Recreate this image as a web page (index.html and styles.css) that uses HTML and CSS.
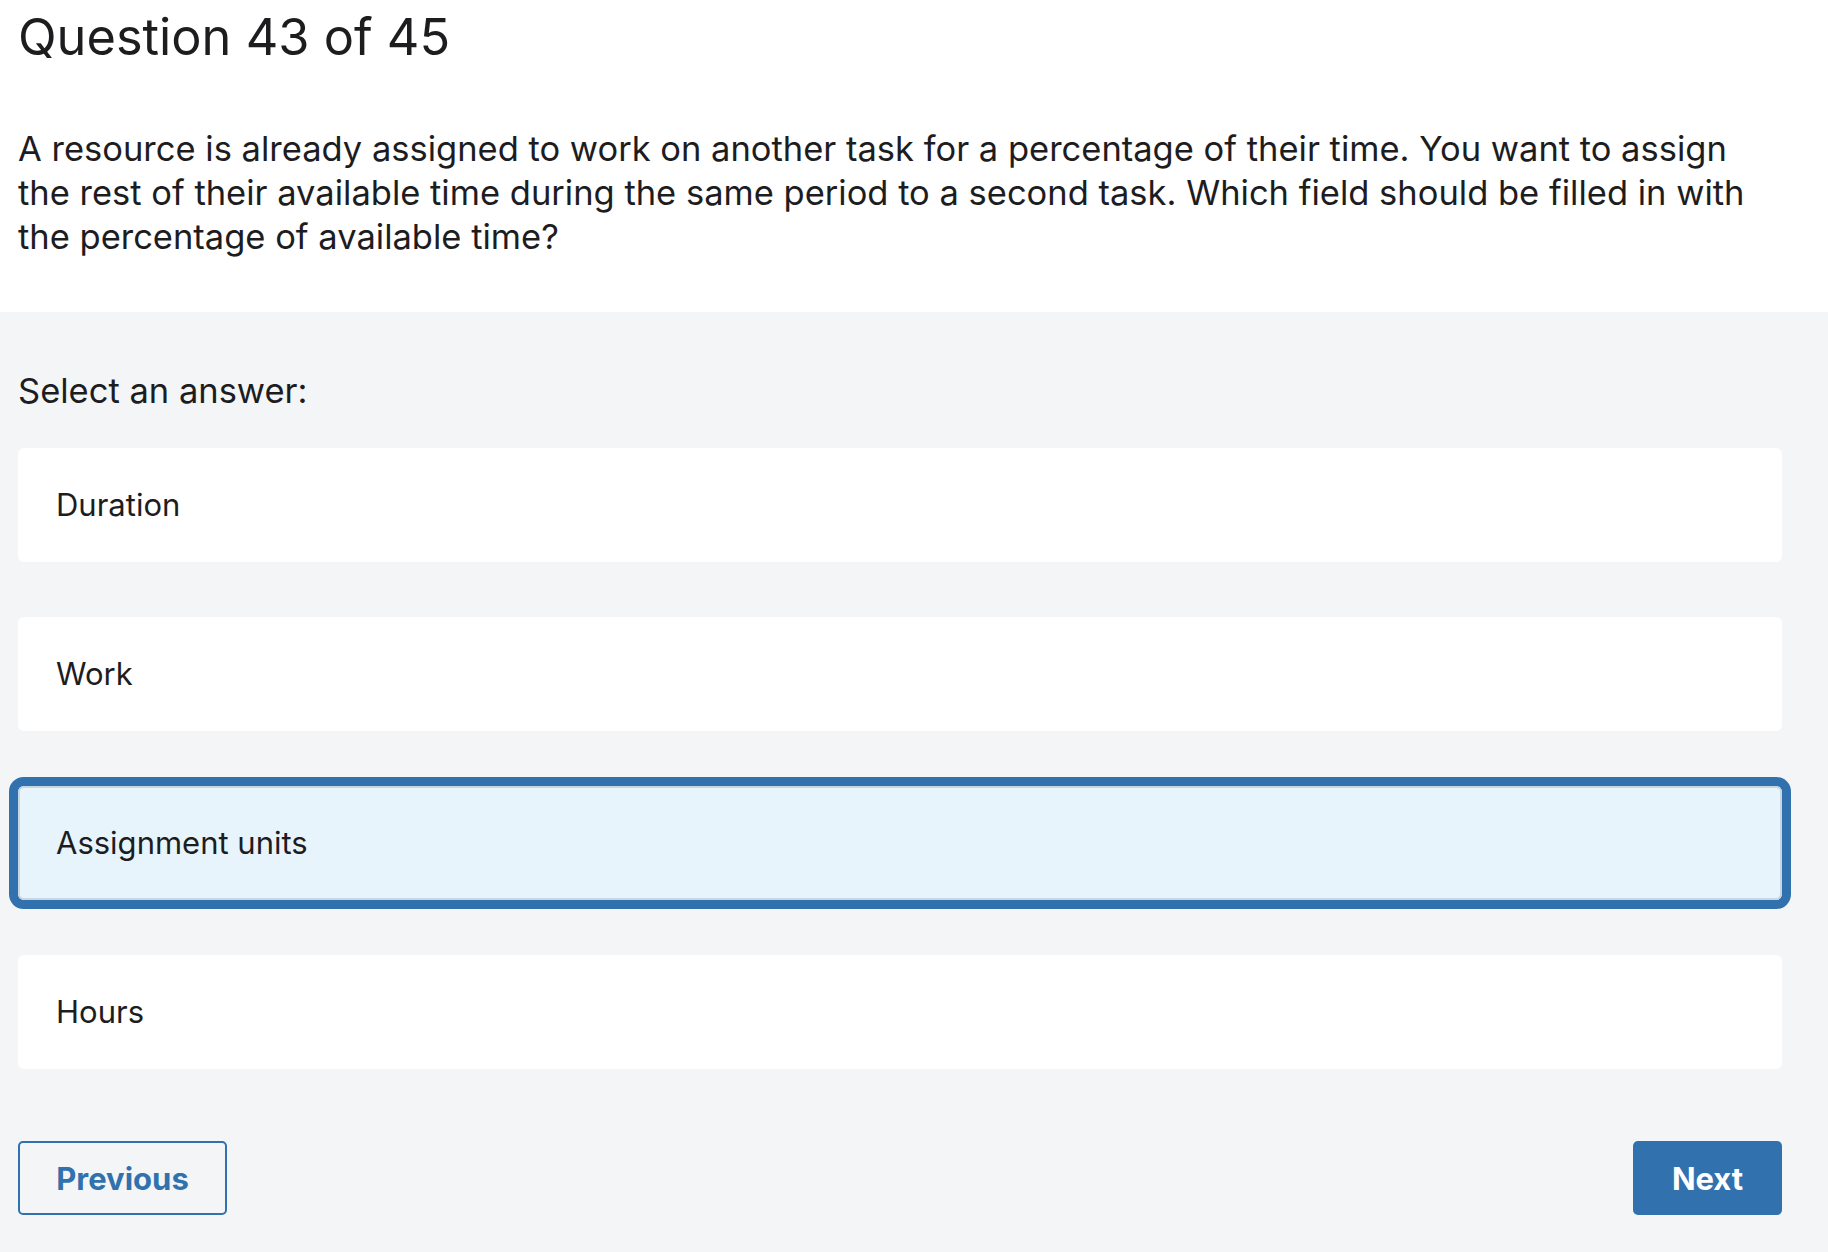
FILE: index.html
```html
<!DOCTYPE html>
<html lang="en">
<head>
  <meta charset="UTF-8">
  <title>Question 43 of 45</title>
  <link rel="stylesheet" href="styles.css">
</head>
<body>
  <div class="question">
    <h1>Question 43 of 45</h1>
    <p>A resource is already assigned to work on another task for a percentage of their time. You want to assign the rest of their available time during the same period to a second task. Which field should be filled in with the percentage of available time?</p>
  </div>

  <div class="answers">
    <div class="label">Select an answer:</div>
    <div class="options">
      <div class="option">Duration</div>
      <div class="option">Work</div>
      <div class="option selected">Assignment units</div>
      <div class="option">Hours</div>
    </div>

    <div class="nav">
      <button class="btn-prev">Previous</button>
      <button class="btn-next">Next</button>
    </div>
  </div>
</body>
</html>
```

FILE: styles.css
```css
body {
  margin: 0;
  font-family: Inter, 'Noto Sans', sans-serif;
  background: #f4f5f7;
  color: #1d1d1f;
}

.question {
  background: #fff;
  padding: 7px 46px 53px 18px;
}

.question h1 {
  margin: 0 0 60px;
  font-size: 50.5px;
  line-height: 60px;
  font-weight: 400;
}

.question p {
  margin: 0;
  max-width: 1745px;
  font-size: 34.5px;
  line-height: 44px;
}

.answers {
  padding: 57px 46px 36px 18px;
}

.label {
  font-size: 34.5px;
  line-height: 44px;
  margin-bottom: 35px;
}

.options {
  display: flex;
  flex-direction: column;
  gap: 55px;
}

.option {
  height: 114px;
  box-sizing: border-box;
  padding: 35px 38px;
  background: #fff;
  border-radius: 6px;
  font-size: 31px;
  line-height: 44px;
}

.option.selected {
  background: #e8f4fc;
  box-shadow: inset 0 0 0 2px #c8d6e2, 0 0 0 9px #3171ad;
}

.nav {
  display: flex;
  justify-content: space-between;
  margin-top: 72px;
}

.nav button {
  height: 74px;
  font-family: inherit;
  font-size: 31px;
  font-weight: 700;
  border-radius: 5px;
  cursor: pointer;
}

.btn-prev {
  width: 209px;
  background: transparent;
  color: #3171ad;
  border: 2px solid #3171ad;
}

.btn-next {
  width: 149px;
  background: #3171ad;
  color: #fff;
  border: none;
}
```
